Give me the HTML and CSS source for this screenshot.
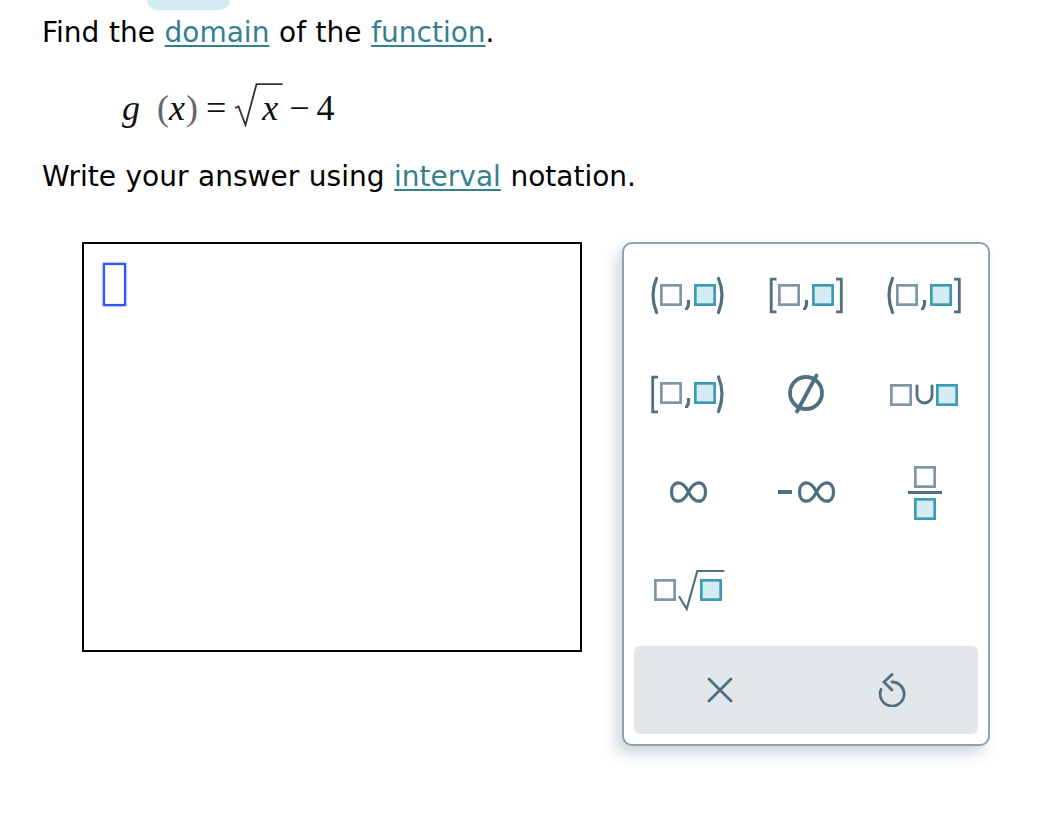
FILE: index.html
```html
<!DOCTYPE html>
<html lang="en">
<head>
  <meta charset="UTF-8">
  <title>Find the domain of the function</title>
  <link rel="stylesheet" href="styles.css">
</head>
<body>
  <svg class="defs" width="0" height="0">
    <symbol id="box-a" width="22" height="22"><rect class="box-a" x="1.35" y="1.35" width="19.3" height="19.3"/></symbol>
    <symbol id="box-b" width="22" height="22"><rect class="box-b" x="1.35" y="1.35" width="19.3" height="19.3"/></symbol>
    <symbol id="inf" width="38" height="22"><path class="ink bold" d="M18.5 11C15.500 5 12 1.800 8.500 1.800C4 1.800 1.500 6 1.500 11C1.500 16 4 20.200 8.500 20.200C12 20.200 15.500 17 18.500 11C21.500 5 25 1.800 28.500 1.800C33 1.800 35.500 6 35.500 11C35.500 16 33 20.200 28.500 20.200C25 20.200 21.500 17 18.500 11Z"/></symbol>
    <symbol id="comma" width="6" height="10"><path class="ink bold" d="M3.500 0.500V3.500Q3.500 6.500 1.500 9"/></symbol>
  </svg>

  <div class="tab"></div>

  <p class="line">Find the <a href="#">domain</a> of the <a href="#">function</a>.</p>

  <div class="formula">
    <i class="fn">g</i>
    <span class="paren">(</span><i class="arg">x</i><span class="paren">)</span>
    <span class="eq">=</span>
    <span class="root"><svg class="radical" width="50" height="44"><path d="M1 25L4.500 23.500L11.500 42L22.500 1.200H48.500"/></svg><i>x</i></span>
    <span class="minus">&minus;</span>
    <span>4</span>
  </div>

  <p class="line">Write your answer using <a href="#">interval</a> notation.</p>

  <div class="answer-row">
    <div class="answer-box"><div class="cursor"></div></div>

    <div class="palette">
      <div class="keys">
        <!-- open interval -->
        <button class="key"><svg class="icon">
          <path class="ink bold" d="M15.500 14.500Q8.500 31 15.500 48.500M77.500 14.500Q84.500 31 77.500 48.500"/>
          <use href="#box-a" x="19" y="20"/><use href="#comma" x="44" y="36"/><use href="#box-b" x="53" y="20"/>
        </svg></button>
        <!-- closed interval -->
        <button class="key"><svg class="icon">
          <path class="ink square" d="M20.500 15.200H15.200V47.800H20.500M80 15.200H85.300V47.800H80"/>
          <use href="#box-a" x="22" y="20"/><use href="#comma" x="47" y="36"/><use href="#box-b" x="56" y="20"/>
        </svg></button>
        <!-- half open right -->
        <button class="key"><svg class="icon">
          <path class="ink bold" d="M21.500 14.500Q14.500 31 21.500 48.500"/>
          <path class="ink square" d="M83 15.200H88.300V47.800H83"/>
          <use href="#box-a" x="25" y="20"/><use href="#comma" x="50" y="36"/><use href="#box-b" x="59" y="20"/>
        </svg></button>

        <!-- half open left -->
        <button class="key"><svg class="icon">
          <path class="ink square" d="M17 15.200H11.700V49.800H17"/>
          <path class="ink bold" d="M77.500 15Q84.500 32 77.500 49.500"/>
          <use href="#box-a" x="19" y="20"/><use href="#comma" x="44" y="36"/><use href="#box-b" x="53" y="20"/>
        </svg></button>
        <!-- empty set -->
        <button class="key"><svg class="icon">
          <circle class="ink thick" cx="50" cy="31" r="16"/>
          <path class="ink thick" d="M60.500 13.500L41 49.500"/>
        </svg></button>
        <!-- union -->
        <button class="key"><svg class="icon">
          <use href="#box-a" x="19" y="22"/>
          <path class="ink" d="M46 24V33.500a7.500 7.500 0 0 0 15 0V24"/>
          <use href="#box-b" x="65" y="22"/>
        </svg></button>

        <!-- infinity -->
        <button class="key"><svg class="icon"><use href="#inf" x="29" y="21"/></svg></button>
        <!-- negative infinity -->
        <button class="key"><svg class="icon">
          <rect class="fill" x="22" y="30" width="14" height="4"/>
          <use href="#inf" x="42" y="21"/>
        </svg></button>
        <!-- fraction -->
        <button class="key"><svg class="icon">
          <use href="#box-a" x="43" y="6"/>
          <rect class="fill" x="37" y="31" width="34" height="3"/>
          <use href="#box-b" x="43" y="38"/>
        </svg></button>

        <!-- nth root -->
        <button class="key"><svg class="icon">
          <use href="#box-a" x="13" y="21"/>
          <path class="ink thin" d="M38.500 39L45.700 51L56.300 13H82.500"/>
          <use href="#box-b" x="59" y="21"/>
        </svg></button>
      </div>

      <div class="actions">
        <button class="action"><svg class="action-icon" width="26" height="26"><path class="ink" d="M2 2L24 24M24 2L2 24"/></svg></button>
        <button class="action"><svg class="action-icon" width="28" height="34"><path class="ink" d="M14 9A12 12 0 1 1 3 16.500"/><path class="ink" d="M14 1.500L6 9L14 17"/></svg></button>
      </div>
    </div>
  </div>
</body>
</html>
```

FILE: styles.css
```css
* { box-sizing: border-box; }
body {
  margin: 0;
  padding: 0 42px 60px;
  min-height: 100vh;
  font-family: "DejaVu Sans", Verdana, sans-serif;
  background-color: #fff;
  color: #000;
}
.defs {
  display: block;
  height: 0;
}
.tab {
  width: 83px;
  height: 10px;
  margin-left: 105px;
  margin-bottom: 1px;
  background-color: #d3edf2;
  border-radius: 0 0 10px 10px;
}
.line {
  margin: 0;
  font-size: 28px;
  line-height: 44px;
  word-spacing: 0.7px;
}
a {
  color: #35808f;
  text-decoration: underline;
  text-decoration-thickness: 2px;
  text-underline-offset: 3px;
}

/* formula */
.formula {
  display: flex;
  align-items: baseline;
  height: 100px;
  padding-top: 32px;
  padding-left: 80px;
  font-family: "Liberation Serif", serif;
  font-size: 36px;
  color: #111;
}
.fn { margin-right: 17px; }
.paren { color: #666; }
.arg { margin-right: 1px; }
.eq { margin: 0 8px 0 8px; }
.root {
  position: relative;
  padding-left: 28px;
}
.radical {
  position: absolute;
  left: 0;
  top: -4px;
}
.radical path {
  fill: none;
  stroke: #333;
  stroke-width: 1.8;
}
.minus { margin: 0 7px 0 11px; }

/* answer area */
.answer-row {
  display: flex;
  align-items: flex-start;
  gap: 40px;
  margin-top: 43px;
  padding-left: 40px;
}
.answer-box {
  width: 500px;
  height: 410px;
  padding: 19px;
  border: 2px solid #000;
}
.cursor {
  width: 23px;
  height: 43px;
  border: 2px solid #3355f5;
  box-shadow: 0 0 2px #3355f5, inset 0 0 1px #3355f5;
}

/* palette */
.palette {
  width: 368px;
  height: 504px;
  padding: 1px 10px 10px;
  border: 2px solid #8ba3ac;
  border-radius: 10px;
  background-color: #fff;
  box-shadow: -6px 8px 14px rgba(70, 100, 115, 0.25);
}
.keys {
  display: grid;
  grid-template-columns: 114px 116px 114px;
  grid-auto-rows: 98px;
}
.key, .action {
  display: flex;
  justify-content: center;
  align-items: center;
  padding: 0;
  border: none;
  background: none;
}
.icon {
  display: block;
  width: 100px;
  height: 60px;
}
.actions {
  display: flex;
  height: 88px;
  margin-top: 9px;
  background-color: #e1e6e9;
  border-radius: 6px;
}
.action { flex: 1; }
.action-icon { display: block; }

.ink {
  fill: none;
  stroke: #4f7080;
  stroke-width: 2.8;
  stroke-linecap: round;
}
.bold { stroke-width: 3.2; }
.square {
  stroke-width: 2.8;
  stroke-linecap: butt;
}
.thick { stroke-width: 3.8; }
.thin { stroke-width: 2.2; }
.fill { fill: #4f7080; }
.box-a {
  fill: #fff;
  stroke: #7d97a3;
  stroke-width: 2.7;
}
.box-b {
  fill: #d3edf2;
  stroke: #3f9ab5;
  stroke-width: 2.7;
}
```
